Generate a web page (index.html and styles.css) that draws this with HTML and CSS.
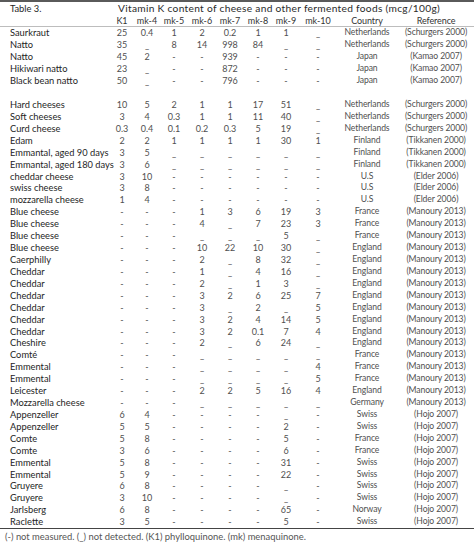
FILE: index.html
```html
<!DOCTYPE html>
<html>
<head>
<meta charset="utf-8">
<link rel="stylesheet" href="styles.css">
</head>
<body>
<div class="page">
<table class="vk">
<colgroup>
<col class="c-name"><col class="c-k1"><col class="c-mk4"><col class="c-mk"><col class="c-mk"><col class="c-mk"><col class="c-mk"><col class="c-mk"><col class="c-mk10"><col class="c-country"><col class="c-ref">
</colgroup>
<thead>
<tr class="title-row"><th class="name">Table 3.</th><th class="title" colspan="10">Vitamin K content of cheese and other fermented foods (mcg/100g)</th></tr>
<tr class="head-row"><th></th><th>K1</th><th>mk-4</th><th>mk-5</th><th>mk-6</th><th>mk-7</th><th>mk-8</th><th>mk-9</th><th>mk-10</th><th class="txt">Country</th><th class="txt">Reference</th></tr>
</thead>
<tbody>
<tr><td class="name">Saurkraut</td><td>25</td><td>0.4</td><td>1</td><td>2</td><td>0.2</td><td>1</td><td>1</td><td>_</td><td class="txt">Netherlands</td><td class="txt">(Schurgers 2000)</td></tr>
<tr><td class="name">Natto</td><td>35</td><td>_</td><td>8</td><td>14</td><td>998</td><td>84</td><td>_</td><td>_</td><td class="txt">Netherlands</td><td class="txt">(Schurgers 2000)</td></tr>
<tr><td class="name">Natto</td><td>45</td><td>2</td><td>-</td><td>-</td><td>939</td><td>-</td><td>-</td><td>-</td><td class="txt">Japan</td><td class="txt">(Kamao 2007)</td></tr>
<tr><td class="name">Hikiwari natto</td><td>23</td><td>_</td><td>-</td><td>-</td><td>872</td><td>-</td><td>-</td><td>-</td><td class="txt">Japan</td><td class="txt">(Kamao 2007)</td></tr>
<tr><td class="name">Black bean natto</td><td>50</td><td>_</td><td>-</td><td>-</td><td>796</td><td>-</td><td>-</td><td>-</td><td class="txt">Japan</td><td class="txt">(Kamao 2007)</td></tr>
<tr><td class="name">&nbsp;</td><td></td><td></td><td></td><td></td><td></td><td></td><td></td><td></td><td></td><td></td></tr>
<tr><td class="name">Hard cheeses</td><td>10</td><td>5</td><td>2</td><td>1</td><td>1</td><td>17</td><td>51</td><td>_</td><td class="txt">Netherlands</td><td class="txt">(Schurgers 2000)</td></tr>
<tr><td class="name">Soft cheeses</td><td>3</td><td>4</td><td>0.3</td><td>1</td><td>1</td><td>11</td><td>40</td><td>_</td><td class="txt">Netherlands</td><td class="txt">(Schurgers 2000)</td></tr>
<tr><td class="name">Curd cheese</td><td>0.3</td><td>0.4</td><td>0.1</td><td>0.2</td><td>0.3</td><td>5</td><td>19</td><td>_</td><td class="txt">Netherlands</td><td class="txt">(Schurgers 2000)</td></tr>
<tr><td class="name">Edam</td><td>2</td><td>2</td><td>1</td><td>1</td><td>1</td><td>1</td><td>30</td><td>1</td><td class="txt">Finland</td><td class="txt">(Tikkanen 2000)</td></tr>
<tr><td class="name">Emmantal, aged 90 days</td><td>3</td><td>5</td><td>_</td><td>_</td><td>_</td><td>_</td><td>_</td><td>_</td><td class="txt">Finland</td><td class="txt">(Tikkanen 2000)</td></tr>
<tr><td class="name">Emmantal, aged 180 days</td><td>3</td><td>6</td><td>_</td><td>_</td><td>_</td><td>_</td><td>_</td><td>_</td><td class="txt">Finland</td><td class="txt">(Tikkanen 2000)</td></tr>
<tr><td class="name">cheddar cheese</td><td>3</td><td>10</td><td>-</td><td>-</td><td>-</td><td>-</td><td>-</td><td>-</td><td class="txt">U.S</td><td class="txt">(Elder 2006)</td></tr>
<tr><td class="name">swiss cheese</td><td>3</td><td>8</td><td>-</td><td>-</td><td>-</td><td>-</td><td>-</td><td>-</td><td class="txt">U.S</td><td class="txt">(Elder 2006)</td></tr>
<tr><td class="name">mozzarella cheese</td><td>1</td><td>4</td><td>-</td><td>-</td><td>-</td><td>-</td><td>-</td><td>-</td><td class="txt">U.S</td><td class="txt">(Elder 2006)</td></tr>
<tr><td class="name">Blue cheese</td><td>-</td><td>-</td><td>-</td><td>1</td><td>3</td><td>6</td><td>19</td><td>3</td><td class="txt">France</td><td class="txt">(Manoury 2013)</td></tr>
<tr><td class="name">Blue cheese</td><td>-</td><td>-</td><td>-</td><td>4</td><td>_</td><td>7</td><td>23</td><td>3</td><td class="txt">France</td><td class="txt">(Manoury 2013)</td></tr>
<tr><td class="name">Blue cheese</td><td>-</td><td>-</td><td>-</td><td>_</td><td>_</td><td>_</td><td>5</td><td>_</td><td class="txt">France</td><td class="txt">(Manoury 2013)</td></tr>
<tr><td class="name">Blue cheese</td><td>-</td><td>-</td><td>-</td><td>10</td><td>22</td><td>10</td><td>30</td><td>_</td><td class="txt">England</td><td class="txt">(Manoury 2013)</td></tr>
<tr><td class="name">Caerphilly</td><td>-</td><td>-</td><td>-</td><td>2</td><td>_</td><td>8</td><td>32</td><td>_</td><td class="txt">England</td><td class="txt">(Manoury 2013)</td></tr>
<tr><td class="name">Cheddar</td><td>-</td><td>-</td><td>-</td><td>1</td><td>_</td><td>4</td><td>16</td><td>_</td><td class="txt">England</td><td class="txt">(Manoury 2013)</td></tr>
<tr><td class="name">Cheddar</td><td>-</td><td>-</td><td>-</td><td>2</td><td>_</td><td>1</td><td>3</td><td>_</td><td class="txt">England</td><td class="txt">(Manoury 2013)</td></tr>
<tr><td class="name">Cheddar</td><td>-</td><td>-</td><td>-</td><td>3</td><td>2</td><td>6</td><td>25</td><td>7</td><td class="txt">England</td><td class="txt">(Manoury 2013)</td></tr>
<tr><td class="name">Cheddar</td><td>-</td><td>-</td><td>-</td><td>3</td><td>_</td><td>2</td><td>_</td><td>5</td><td class="txt">England</td><td class="txt">(Manoury 2013)</td></tr>
<tr><td class="name">Cheddar</td><td>-</td><td>-</td><td>-</td><td>3</td><td>2</td><td>4</td><td>14</td><td>5</td><td class="txt">England</td><td class="txt">(Manoury 2013)</td></tr>
<tr><td class="name">Cheddar</td><td>-</td><td>-</td><td>-</td><td>3</td><td>2</td><td>0.1</td><td>7</td><td>4</td><td class="txt">England</td><td class="txt">(Manoury 2013)</td></tr>
<tr><td class="name">Cheshire</td><td>-</td><td>-</td><td>-</td><td>2</td><td>_</td><td>6</td><td>24</td><td>_</td><td class="txt">England</td><td class="txt">(Manoury 2013)</td></tr>
<tr><td class="name">Comté</td><td>-</td><td>-</td><td>-</td><td>_</td><td>_</td><td>_</td><td>_</td><td>_</td><td class="txt">France</td><td class="txt">(Manoury 2013)</td></tr>
<tr><td class="name">Emmental</td><td>-</td><td>-</td><td>-</td><td>_</td><td>_</td><td>_</td><td>_</td><td>4</td><td class="txt">France</td><td class="txt">(Manoury 2013)</td></tr>
<tr><td class="name">Emmental</td><td>-</td><td>-</td><td>-</td><td>_</td><td>_</td><td>_</td><td>_</td><td>5</td><td class="txt">France</td><td class="txt">(Manoury 2013)</td></tr>
<tr><td class="name">Leicester</td><td>-</td><td>-</td><td>-</td><td>2</td><td>2</td><td>5</td><td>16</td><td>4</td><td class="txt">England</td><td class="txt">(Manoury 2013)</td></tr>
<tr><td class="name">Mozzarella cheese</td><td>-</td><td>-</td><td>-</td><td>_</td><td>_</td><td>_</td><td>_</td><td>_</td><td class="txt">Germany</td><td class="txt">(Manoury 2013)</td></tr>
<tr><td class="name">Appenzeller</td><td>6</td><td>4</td><td>-</td><td>-</td><td>-</td><td>-</td><td>_</td><td>-</td><td class="txt">Swiss</td><td class="txt">(Hojo 2007)</td></tr>
<tr><td class="name">Appenzeller</td><td>5</td><td>5</td><td>-</td><td>-</td><td>-</td><td>-</td><td>2</td><td>-</td><td class="txt">Swiss</td><td class="txt">(Hojo 2007)</td></tr>
<tr><td class="name">Comte</td><td>5</td><td>8</td><td>-</td><td>-</td><td>-</td><td>-</td><td>5</td><td>-</td><td class="txt">France</td><td class="txt">(Hojo 2007)</td></tr>
<tr><td class="name">Comte</td><td>3</td><td>6</td><td>-</td><td>-</td><td>-</td><td>-</td><td>6</td><td>-</td><td class="txt">France</td><td class="txt">(Hojo 2007)</td></tr>
<tr><td class="name">Emmental</td><td>5</td><td>8</td><td>-</td><td>-</td><td>-</td><td>-</td><td>31</td><td>-</td><td class="txt">Swiss</td><td class="txt">(Hojo 2007)</td></tr>
<tr><td class="name">Emmental</td><td>5</td><td>9</td><td>-</td><td>-</td><td>-</td><td>-</td><td>22</td><td>-</td><td class="txt">Swiss</td><td class="txt">(Hojo 2007)</td></tr>
<tr><td class="name">Gruyere</td><td>6</td><td>8</td><td>-</td><td>-</td><td>-</td><td>-</td><td>_</td><td>-</td><td class="txt">Swiss</td><td class="txt">(Hojo 2007)</td></tr>
<tr><td class="name">Gruyere</td><td>3</td><td>10</td><td>-</td><td>-</td><td>-</td><td>-</td><td>_</td><td>-</td><td class="txt">Swiss</td><td class="txt">(Hojo 2007)</td></tr>
<tr><td class="name">Jarlsberg</td><td>6</td><td>8</td><td>-</td><td>-</td><td>-</td><td>-</td><td>65</td><td>-</td><td class="txt">Norway</td><td class="txt">(Hojo 2007)</td></tr>
<tr class="last"><td class="name">Raclette</td><td>3</td><td>5</td><td>-</td><td>-</td><td>-</td><td>-</td><td>5</td><td>-</td><td class="txt">Swiss</td><td class="txt">(Hojo 2007)</td></tr>
</tbody>
</table>
<p class="note">(-) not measured. (_) not detected. (K1) phylloquinone. (mk) menaquinone.</p>
</div>
</body>
</html>
```

FILE: styles.css
```css
html, body {
  margin: 0;
  padding: 0;
  background: #ffffff;
}

.page {
  width: 474px;
  font-family: Lato, "Liberation Sans", sans-serif;
  font-size: 9px;
  color: #4a4a4a;
}

.vk {
  width: 474px;
  border-collapse: collapse;
  table-layout: fixed;
  border-top: 2px solid #5a5a5a;
}

.c-name { width: 110px; }
.c-k1 { width: 24px; }
.c-mk4 { width: 26px; }
.c-mk { width: 28px; }
.c-mk10 { width: 36px; }
.c-country { width: 62px; }
.c-ref { width: 76px; }

.vk th,
.vk td {
  padding: 0;
  height: 11.93px;
  line-height: 11px;
  text-align: center;
  white-space: nowrap;
  font-weight: 400;
}

.vk .name {
  text-align: left;
  padding-left: 10px;
  color: #1e1e1e;
  font-size: 9.3px;
}

.vk .txt {
  font-size: 8.6px;
  letter-spacing: -0.1px;
}

.title-row th {
  height: 12px;
  color: #2a2a2a;
  font-size: 9.8px;
}

.title-row .title {
  text-align: left;
  padding-left: 8px;
  font-size: 10.2px;
  letter-spacing: 0.3px;
}

.head-row th {
  color: #333333;
  border-bottom: 1px solid #bdbdbd;
  height: 12px;
  font-size: 9px;
}

.head-row th.txt {
  font-size: 9px;
}

.vk td {
  color: #4f4f4f;
}

.vk tr.last td {
  border-bottom: 1.5px solid #444444;
}

.note {
  margin: 2px 0 0 5px;
  font-size: 9.4px;
  color: #555555;
  line-height: 12px;
}
```
